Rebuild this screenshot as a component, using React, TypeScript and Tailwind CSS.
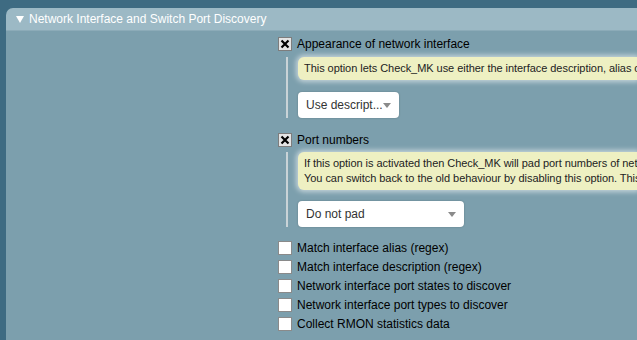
import React from "react";

const font = { fontFamily: '"Liberation Sans", Arial, sans-serif' };

function CheckBox({ checked }: { checked: boolean }) {
  return (
    <div
      className={
        "w-[14px] h-[14px] shrink-0 border flex items-center justify-center " +
        (checked ? "border-[#7d7d7d] bg-[#e4e4e4]" : "border-[#8a8a8a] bg-white")
      }
    >
      {checked && (
        <svg width="10" height="10" viewBox="0 0 10 10">
          <path d="M1.5 1.5 L8.5 8.5 M8.5 1.5 L1.5 8.5" stroke="#000" strokeWidth="2.2" />
        </svg>
      )}
    </div>
  );
}

function Row({ checked, label }: { checked: boolean; label: string }) {
  return (
    <div className="flex items-center h-[19px] gap-[5px]">
      <CheckBox checked={checked} />
      <span className="text-[12px] text-black leading-none whitespace-nowrap">{label}</span>
    </div>
  );
}

function Select({ text, width }: { text: string; width: string }) {
  return (
    <div
      className={
        "h-[26px] bg-white rounded-[4px] flex items-center justify-between pl-[8px] pr-[8px] shadow-[0_0_2px_rgba(0,0,0,0.25)] " +
        width
      }
    >
      <span className="text-[12px] text-[#333] whitespace-nowrap">{text}</span>
      <svg width="8" height="5" viewBox="0 0 8 5" className="shrink-0">
        <path d="M0 0 L8 0 L4 5 Z" fill="#8a8a8a" />
      </svg>
    </div>
  );
}

function Help({ children }: { children: React.ReactNode }) {
  return (
    <div className="bg-[#eef0c2] rounded-l-[6px] px-[6px] py-[4px] text-[11px] leading-[15px] tracking-[-0.05px] text-[#222] whitespace-nowrap overflow-hidden shadow-[0_0_5px_2px_rgba(255,255,255,0.55)]">
      {children}
    </div>
  );
}

export default function App() {
  return (
    <div
      className="w-[637px] h-[340px] overflow-hidden bg-[#3e6b82] pl-[6px] pt-[8px]"
      style={font}
    >
      <div className="h-full rounded-tl-[7px] overflow-hidden flex flex-col">
        <div className="h-[23px] shrink-0 bg-[#9cb9c5] flex items-center pl-[10px] gap-[5px] border-b border-[#8cabb8]">
          <svg width="8" height="7" viewBox="0 0 8 7">
            <path d="M0 0 L8 0 L4 7 Z" fill="#fff" />
          </svg>
          <span className="text-[12px] text-white whitespace-nowrap">Network Interface and Switch Port Discovery</span>
        </div>
        <div className="flex-1 bg-[#7c9fad] pl-[272px] pt-[3px]">
          <Row checked label="Appearance of network interface" />
          <div className="ml-[8px] border-l-2 border-[#c9d3d7] pl-[10px] mt-[4px] flex flex-col gap-[12px]">
            <Help>This option lets Check_MK use either the interface description, alias or name</Help>
            <Select text="Use descript..." width="w-[101px]" />
          </div>
          <div className="mt-[12px]">
            <Row checked label="Port numbers" />
          </div>
          <div className="ml-[8px] border-l-2 border-[#c9d3d7] pl-[10px] mt-[3px] flex flex-col gap-[11px]">
            <Help>
              <div>If this option is activated then Check_MK will pad port numbers of network interfaces</div>
              <div>You can switch back to the old behaviour by disabling this option. This will</div>
            </Help>
            <Select text="Do not pad" width="w-[166px]" />
          </div>
          <div className="mt-[11px]">
            <Row checked={false} label="Match interface alias (regex)" />
            <Row checked={false} label="Match interface description (regex)" />
            <Row checked={false} label="Network interface port states to discover" />
            <Row checked={false} label="Network interface port types to discover" />
            <Row checked={false} label="Collect RMON statistics data" />
          </div>
        </div>
      </div>
    </div>
  );
}
